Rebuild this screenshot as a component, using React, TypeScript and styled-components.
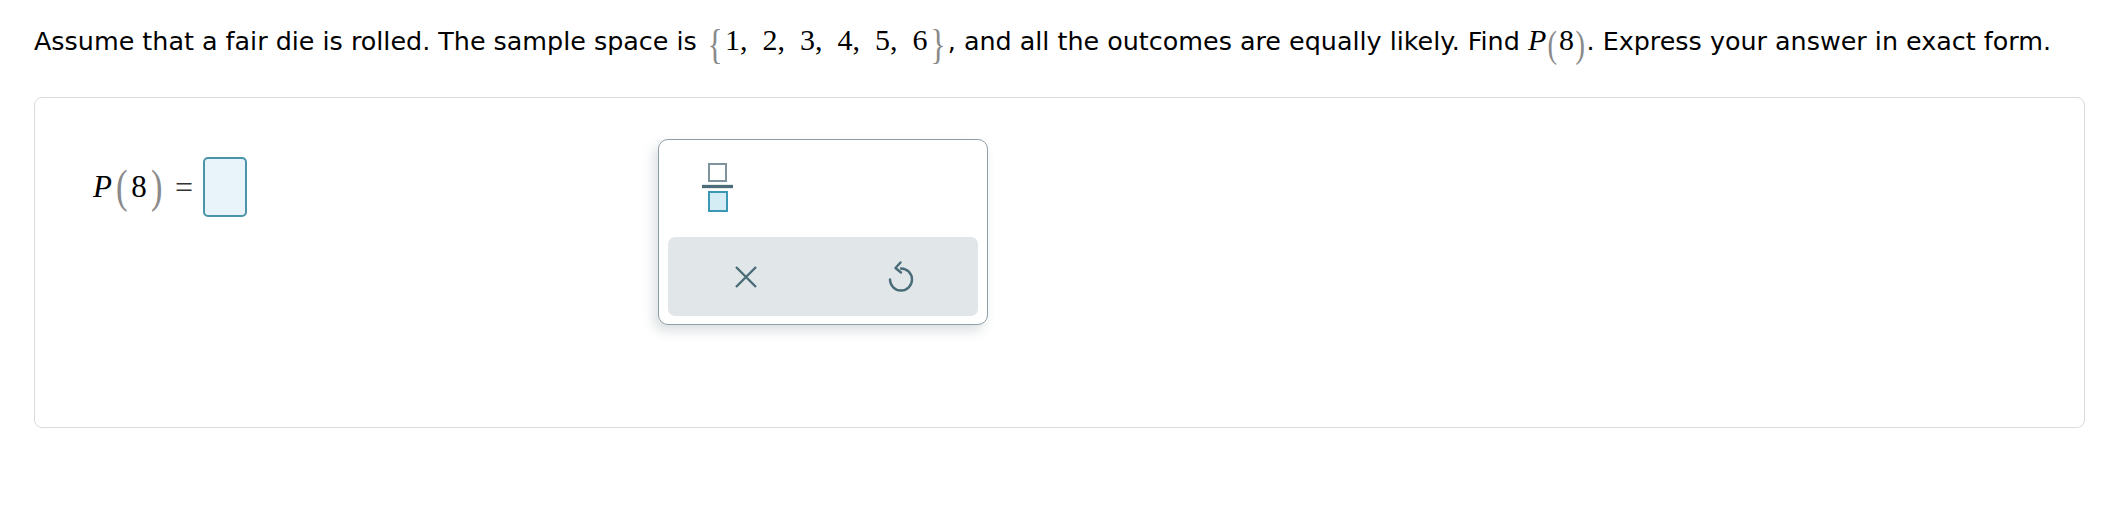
import React from 'react';
import styled, { createGlobalStyle } from 'styled-components';

const GlobalStyle = createGlobalStyle`
  html, body {
    margin: 0;
    padding: 0;
    background: #ffffff;
  }
  body {
    font-family: Verdana, "DejaVu Sans", sans-serif;
    color: #000000;
  }
`;

const Page = styled.div`
  padding: 12px 43px 0 34px;
`;

const Question = styled.div`
  font-size: 25.4px;
  line-height: 56px;
  white-space: nowrap;
  height: 56px;
  margin-bottom: 29px;
`;

const MathText = styled.span<{ $size?: number; $italic?: boolean }>`
  font-family: "Liberation Serif", "Times New Roman", serif;
  font-size: ${(p) => p.$size ?? 30}px;
  font-style: ${(p) => (p.$italic ? 'italic' : 'normal')};
`;

const Fence = styled.span<{ $size: number; $gap?: number }>`
  font-family: "Liberation Serif", "Times New Roman", serif;
  font-size: ${(p) => p.$size}px;
  color: #8a8a8a;
  display: inline-block;
  line-height: 1;
  vertical-align: -0.18em;
  transform: scaleX(0.75);
  margin: 0 ${(p) => p.$gap ?? 0}px;
`;

const Comma = styled.span`
  margin-right: 15px;
`;

const Card = styled.div`
  position: relative;
  height: 329px;
  border: 1px solid #d6dcdf;
  border-radius: 8px;
  background: #ffffff;
`;

const AnswerRow = styled.div`
  display: flex;
  align-items: center;
  gap: 10px;
  padding: 59px 0 0 58px;
`;

const Expr = styled.div`
  display: flex;
  align-items: center;
`;

const Equals = styled.span`
  font-family: "Liberation Serif", "Times New Roman", serif;
  font-size: 32px;
  color: #333333;
  margin-left: 9px;
`;

const AnswerBox = styled.div`
  width: 40px;
  height: 56px;
  border: 2px solid #4a94a9;
  border-radius: 5px;
  background: #e8f4fa;
`;

const Palette = styled.div`
  position: absolute;
  left: 623px;
  top: 41px;
  width: 330px;
  height: 186px;
  box-sizing: border-box;
  border: 1px solid #8d9fa8;
  border-radius: 10px;
  background: #ffffff;
  box-shadow: -4px 6px 12px rgba(60, 80, 90, 0.18);
  display: flex;
  flex-direction: column;
  padding: 0 9px 8px 9px;
`;

const PaletteTop = styled.div`
  flex: 1;
  display: flex;
  align-items: flex-start;
  padding: 23px 0 0 34px;
`;

const KeyButton = styled.button`
  border: none;
  background: transparent;
  padding: 0;
  cursor: pointer;
  display: flex;
  align-items: center;
  justify-content: center;
`;

const ActionBar = styled.div`
  height: 79px;
  border-radius: 7px;
  background: #e1e6e9;
  display: grid;
  grid-template-columns: 1fr 1fr;
  align-items: center;
  justify-items: center;
`;

const FractionIcon = () => (
  <svg width="32" height="50" viewBox="0 0 32 50">
    <rect x="7" y="1" width="17" height="17" fill="#ffffff" stroke="#7f939d" strokeWidth="2" />
    <rect x="0" y="21.5" width="31" height="4" fill="#c9d3d8" />
    <rect x="0" y="22" width="31" height="3" fill="#4e6b78" />
    <rect x="7" y="29" width="18" height="19" fill="#d4ecf3" stroke="#3b98b4" strokeWidth="2" />
  </svg>
);

const ClearIcon = () => (
  <svg width="24" height="24" viewBox="0 0 24 24">
    <path d="M2 2 L22 22 M22 2 L2 22" stroke="#4a6b78" strokeWidth="2.4" fill="none" />
  </svg>
);

const UndoIcon = () => (
  <svg width="28" height="34" viewBox="0 0 28 34">
    <path
      d="M14 8.5 A11 11 0 1 1 3 19.5"
      stroke="#4a6b78"
      strokeWidth="2.4"
      fill="none"
      strokeLinecap="round"
    />
    <path
      d="M13.5 2.5 L8.5 8 L14 12.5"
      stroke="#4a6b78"
      strokeWidth="2.4"
      fill="none"
      strokeLinecap="round"
      strokeLinejoin="round"
    />
  </svg>
);

const outcomes = [1, 2, 3, 4, 5, 6];

export default function App() {
  return (
    <>
      <GlobalStyle />
      <Page>
        <Question>
          Assume that a fair die is rolled. The sample space is{' '}
          <Fence $size={42}>{'{'}</Fence>
          <MathText>
            {outcomes.map((n, i) => (
              <React.Fragment key={n}>
                {n}
                {i < outcomes.length - 1 && <Comma>,</Comma>}
              </React.Fragment>
            ))}
          </MathText>
          <Fence $size={42}>{'}'}</Fence>, and all the outcomes are equally likely. Find{' '}
          <MathText $italic>P</MathText>
          <Fence $size={38}>(</Fence>
          <MathText>8</MathText>
          <Fence $size={38}>)</Fence>. Express your answer in exact form.
        </Question>
        <Card>
          <AnswerRow>
            <Expr>
              <MathText $italic $size={31}>P</MathText>
              <Fence $size={46} $gap={2}>(</Fence>
              <MathText $size={31}>8</MathText>
              <Fence $size={46} $gap={2}>)</Fence>
              <Equals>=</Equals>
            </Expr>
            <AnswerBox />
          </AnswerRow>
          <Palette>
            <PaletteTop>
              <KeyButton aria-label="fraction">
                <FractionIcon />
              </KeyButton>
            </PaletteTop>
            <ActionBar>
              <KeyButton aria-label="clear">
                <ClearIcon />
              </KeyButton>
              <KeyButton aria-label="undo">
                <UndoIcon />
              </KeyButton>
            </ActionBar>
          </Palette>
        </Card>
      </Page>
    </>
  );
}
